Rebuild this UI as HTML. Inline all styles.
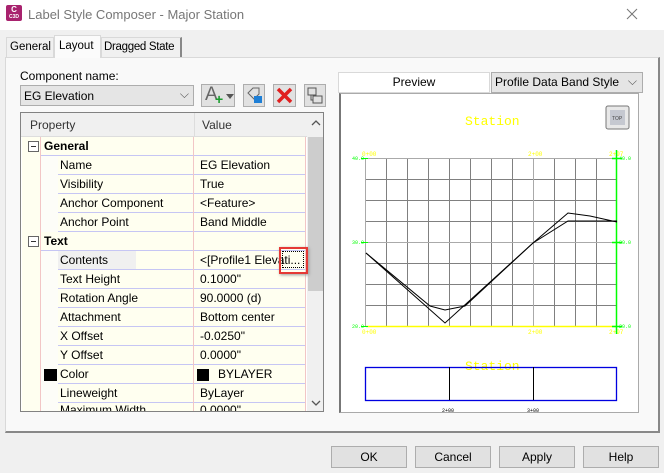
<!DOCTYPE html>
<html><head><style>
*{box-sizing:border-box;margin:0;padding:0}
body{width:664px;height:473px;overflow:hidden;background:#f0f0f0;font-family:"Liberation Sans",sans-serif;font-size:12px;color:#000;position:relative}
.a{position:absolute}
.btn{position:absolute;top:446px;height:22px;width:76px;background:#e1e1e1;border:1px solid #adadad;text-align:center;line-height:20px;font-size:12px}
.row{position:absolute;left:22px;width:284px;height:19px}
.row span{position:absolute;top:2px}
.row .bg{position:absolute;top:0;height:19px;left:18px;right:0;background:#fffff0;border-bottom:1px solid #c6c6f4}
.row .ib{position:absolute;top:0;height:19px;left:18px;width:18px;background:#fdfdf8}
.row .pm{position:absolute;left:6px;top:4px;width:11px;height:11px;border:1px solid #666;background:#fff}
.row .pm:after{content:"";position:absolute;left:2px;top:4px;width:5px;height:1px;background:#333}
.tb{position:absolute;top:84px;height:23px;border:1px solid #adadad;background:#e1e1e1}
</style></head><body>
<div class="a" style="left:0;top:0;width:664px;height:30px;background:#fff"></div>
<div class="a" style="left:6px;top:5px;width:16px;height:16px;background:#a8226e;border-radius:2px;color:#fff;font-size:8px;font-weight:bold;text-align:center;line-height:10px">C<div style="font-size:5px;line-height:5px">C3D</div></div>
<div class="a" style="left:28px;top:7px;font-size:13px;color:#777">Label Style Composer - Major Station</div>
<svg class="a" style="left:626px;top:8px" width="12" height="12"><path d="M1 1L11 11M11 1L1 11" stroke="#777" stroke-width="1"/></svg>
<!-- tabs -->
<div class="a" style="left:6px;top:37px;width:48px;height:20px;border:1px solid #d9d9d9;border-bottom:none;background:#f0f0f0;padding:3px 0 0 3px;font-size:11.5px">General</div>
<div class="a" style="left:54px;top:35px;width:47px;height:23px;border:1px solid #d9d9d9;border-bottom:none;background:#fbfbfb;padding:4px 0 0 4px;z-index:2;font-size:11.5px">Layout</div>
<div class="a" style="left:101px;top:37px;width:81px;height:20px;border:1px solid #d9d9d9;border-right:2px solid #888;border-bottom:none;background:#f0f0f0;padding:3px 0 0 2px;font-size:11.5px;letter-spacing:-0.3px;white-space:nowrap;overflow:hidden">Dragged State</div>
<div class="a" style="left:5px;top:57px;width:655px;height:376px;background:#f9f9f9;border:1px solid #d9d9d9;border-right:2px solid #888;border-bottom:2px solid #888"></div>
<div class="a" style="left:20px;top:69px">Component name:</div>
<div class="a" style="left:20px;top:85px;width:174px;height:21px;border:1px solid #adadad;background:#e5e5e5;padding:3px 0 0 3px">EG Elevation<span style="position:absolute;right:4px;top:1px;color:#555">⌵</span></div>
<div class="tb" style="left:201px;width:34px"><span style="position:absolute;left:3px;top:-1px;font-size:19px;color:#666">A</span><span style="position:absolute;left:13px;top:6px;font-size:14px;font-weight:bold;color:#1a9c2e">+</span><span style="position:absolute;left:24px;top:9px;width:0;height:0;border:4px solid transparent;border-top:5px solid #555"></span></div>
<div class="tb" style="left:243px;width:22px"><svg width="20" height="21"><path d="M4 8 L9 3 L15 3 L15 9 L10 14 Z" fill="none" stroke="#666"/><rect x="10" y="11" width="8" height="7" fill="#1e7fd6"/></svg></div>
<div class="tb" style="left:273px;width:23px"><svg width="21" height="21"><path d="M4 4 L17 17 M17 4 L4 17" stroke="#e02020" stroke-width="3.5"/></svg></div>
<div class="tb" style="left:304px;width:22px"><svg width="20" height="21"><rect x="3" y="3" width="8" height="7" fill="none" stroke="#555"/><rect x="8" y="11" width="9" height="7" fill="none" stroke="#555"/><path d="M6 10 V15 H8" fill="none" stroke="#555"/></svg></div>
<!-- grid -->
<div class="a" style="left:20px;top:112px;width:304px;height:300px;border:1px solid #828282;background:#fff;overflow:hidden">
<div class="a" style="left:0;top:0;width:286px;height:24px;background:#f0f0f0;border-bottom:1px solid #ddd"></div>
<div class="a" style="left:9px;top:5px;color:#333">Property</div>
<div class="a" style="left:173px;top:0;width:1px;height:24px;background:#ddd"></div>
<div class="a" style="left:181px;top:5px;color:#333">Value</div>
<div class="a" style="left:286px;top:0;width:17px;height:300px;background:#f0f0f0"></div>
<div class="a" style="left:287px;top:24px;width:15px;height:154px;background:#cdcdcd"></div>
<svg class="a" style="left:290px;top:6px" width="10" height="8"><path d="M1 6L5 2L9 6" fill="none" stroke="#555" stroke-width="1.3"/></svg>
<svg class="a" style="left:290px;top:286px" width="10" height="8"><path d="M1 2L5 6L9 2" fill="none" stroke="#555" stroke-width="1.3"/></svg>
</div>
<div class="a" style="left:22px;top:137px;width:18px;height:274px;background:#fffff0"></div>
<div class="row" style="top:137px"><div class="bg"></div><div class="pm"></div><span style="left:22px;font-weight:bold">General</span></div>
<div class="row" style="top:156px"><div class="bg"></div><div class="ib"></div><span style="left:38px">Name</span><span style="left:178px">EG Elevation</span></div>
<div class="row" style="top:175px"><div class="bg"></div><div class="ib"></div><span style="left:38px">Visibility</span><span style="left:178px">True</span></div>
<div class="row" style="top:194px"><div class="bg"></div><div class="ib"></div><span style="left:38px">Anchor Component</span><span style="left:178px">&lt;Feature&gt;</span></div>
<div class="row" style="top:213px"><div class="bg"></div><div class="ib"></div><span style="left:38px">Anchor Point</span><span style="left:178px">Band Middle</span></div>
<div class="row" style="top:232px"><div class="bg"></div><div class="pm"></div><span style="left:22px;font-weight:bold">Text</span></div>
<div class="row" style="top:251px"><div class="bg"></div><div class="ib"></div><span style="left:36px;top:0;width:78px;height:18px;background:#f0f0f0"></span><span style="left:38px">Contents</span><span style="left:178px">&lt;[Profile1 Elevati...</span></div>
<div class="row" style="top:270px"><div class="bg"></div><div class="ib"></div><span style="left:38px">Text Height</span><span style="left:178px">0.1000"</span></div>
<div class="row" style="top:289px"><div class="bg"></div><div class="ib"></div><span style="left:38px">Rotation Angle</span><span style="left:178px">90.0000 (d)</span></div>
<div class="row" style="top:308px"><div class="bg"></div><div class="ib"></div><span style="left:38px">Attachment</span><span style="left:178px">Bottom center</span></div>
<div class="row" style="top:327px"><div class="bg"></div><div class="ib"></div><span style="left:38px">X Offset</span><span style="left:178px">-0.0250"</span></div>
<div class="row" style="top:346px"><div class="bg"></div><div class="ib"></div><span style="left:38px">Y Offset</span><span style="left:178px">0.0000"</span></div>
<div class="row" style="top:365px"><div class="bg"></div><div class="ib"></div><span style="left:22px;top:4px;width:13px;height:12px;background:#000"></span><span style="left:38px">Color</span><span style="left:175px;top:4px;width:12px;height:12px;background:#000"></span><span style="left:196px">BYLAYER</span></div>
<div class="row" style="top:384px"><div class="bg"></div><div class="ib"></div><span style="left:38px">Lineweight</span><span style="left:178px">ByLayer</span></div>
<div class="row" style="top:403px;height:8px;overflow:hidden"><div class="bg"></div><div class="ib"></div><span style="left:38px;top:0">Maximum Width</span><span style="left:178px;top:0">0.0000"</span></div>
<div class="a" style="left:40px;top:137px;width:1px;height:274px;background:#f2c6c6"></div>
<div class="a" style="left:193px;top:137px;width:1px;height:274px;background:#f2c6c6"></div>
<div class="a" style="left:305px;top:137px;width:1px;height:274px;background:#f2c6c6"></div>
<div class="a" style="left:279px;top:247px;width:29px;height:27px;border:2px solid #e53935;box-shadow:1px 1px 3px #999"></div>
<div class="a" style="left:282px;top:251px;width:22px;height:17px;border:1px dotted #000"></div>
<!-- preview -->
<div class="a" style="left:338px;top:72px;width:152px;height:21px;border:1px solid #d9d9d9;background:#fff;text-align:center;line-height:19px">Preview</div>
<div class="a" style="left:491px;top:72px;width:152px;height:21px;border:1px solid #adadad;background:#e5e5e5;padding:2px 0 0 3px">Profile Data Band Style<span style="position:absolute;right:5px;top:1px;color:#555">⌵</span></div>
<div class="a" style="left:339px;top:93px;width:300px;height:320px;background:#fff;border:1px solid #aaa;border-left:2px solid #777"></div>
<svg class="a" style="left:0;top:0" width="664" height="473">
<g font-family="Liberation Mono,monospace" fill="#ffff00">
<text x="465" y="125" font-size="13">Station</text>
<text x="465" y="370" font-size="13">Station</text>
<text x="362" y="156" font-size="6">0+00</text><text x="528" y="156" font-size="6">2+00</text><text x="609" y="156" font-size="6">2+97</text>
<text x="362" y="334" font-size="6">0+00</text><text x="528" y="334" font-size="6">2+00</text><text x="609" y="334" font-size="6">2+97</text>
</g>
<g stroke="#808080" stroke-width="1">
<path d="M386.5 158V327M407.5 158V327M428.5 158V327M449.5 158V327M470.5 158V327M491.5 158V327M512.5 158V327M554.5 158V327M575.5 158V327M596.5 158V327"/>
<path d="M366 179.5H617M366 200.5H617M366 221.5H617M366 263.5H617M366 284.5H617M366 305.5H617"/>
</g>
<g stroke="#aaa"><path d="M366 158.5H617M366 242.5H617M533.5 158V327M365.5 158V327"/></g>
<path d="M366 326.5H617" stroke="#ff0" stroke-width="1.5"/>
<path d="M616.5 150V334M612 158.5H622M612 242.5H622M612 326.5H622" stroke="#0f0" stroke-width="1.5"/>
<path d="M361 158.5H368M361 242.5H368M361 326.5H368" stroke="#0f0"/>
<g font-size="5" fill="#0f0" font-family="Liberation Mono,monospace"><text x="352" y="160">40.0</text><text x="352" y="244">30.0</text><text x="352" y="328">20.0</text><text x="619" y="160">40.0</text><text x="619" y="244">30.0</text><text x="619" y="328">20.0</text></g>
<path d="M366 253 L445 323 L533 243 L568 213 L590 216 L617 222" fill="none" stroke="#000"/>
<path d="M366 253 L430 306 L445 310 L465 306 L533 243 L568 221 L617 221" fill="none" stroke="#000"/>
<rect x="365.5" y="367.5" width="251" height="33" fill="none" stroke="#0000e0" stroke-width="1.3"/>
<path d="M449.5 367V400M533.5 367V400" stroke="#000"/>
<g font-size="5" font-family="Liberation Mono,monospace"><text x="442" y="412">2+00</text><text x="527" y="412">3+00</text></g>
<rect x="606" y="106" width="23" height="23" fill="#e8e8e8" stroke="#777" rx="2"/>
<rect x="610" y="110" width="15" height="15" fill="#c5c8d0"/>
<text x="612" y="120" font-size="5" fill="#444" font-family="Liberation Sans">TOP</text>
</svg>
<!-- bottom buttons -->
<div class="btn" style="left:331px">OK</div>
<div class="btn" style="left:415px">Cancel</div>
<div class="btn" style="left:499px">Apply</div>
<div class="btn" style="left:583px">Help</div>
</body></html>
